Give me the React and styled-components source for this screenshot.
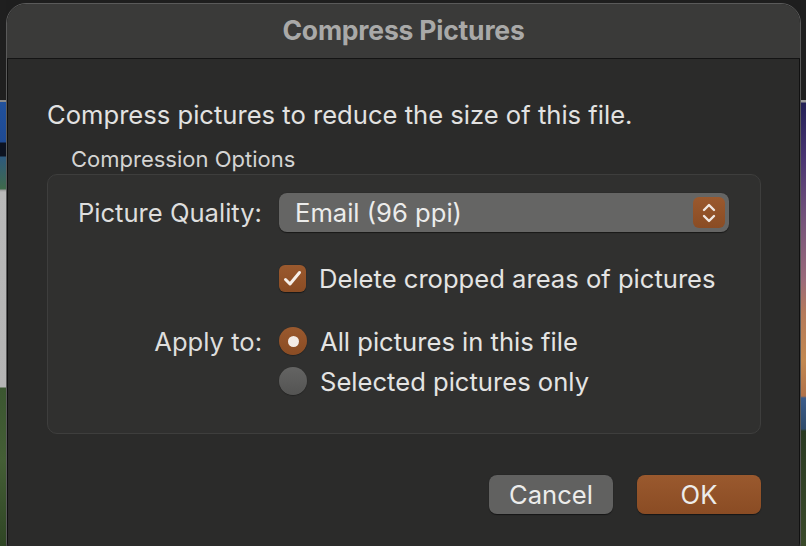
import React, { useState } from "react";
import styled, { createGlobalStyle } from "styled-components";

const GlobalStyle = createGlobalStyle`
  html, body {
    margin: 0;
    padding: 0;
    background: #1e1e1e;
    overflow: hidden;
  }
  * {
    box-sizing: border-box;
  }
`;

const Desktop = styled.div`
  width: 806px;
  height: 546px;
  display: grid;
  grid-template-columns: 6px 1fr 5px;
  background: #1e1e1e;
  font-family: Inter, "Noto Sans", "Liberation Sans", sans-serif;
`;

const Strip = styled.div`
  height: 546px;
  background: ${({ side }) =>
    side === "left"
      ? `linear-gradient(
          to bottom,
          #1f1f1f 0px, #1f1f1f 100px,
          #8a8a8a 100px, #8a8a8a 102px,
          #21519c 102px, #1e4a94 142px,
          #0c1220 143px, #0c1220 156px,
          #2e5a7e 157px, #3f6a4a 189px,
          #9a9a9a 190px, #b9b9b9 192px, #b4b4b4 387px,
          #3b5630 388px, #445e35 460px, #2f4524 546px
        )`
      : `linear-gradient(
          to bottom,
          #1f1f1f 0px, #1f1f1f 100px,
          #9a9a9a 100px, #9a9a9a 102px,
          #222056 103px, #4a3572 160px, #70507a 213px,
          #9a6a7a 280px, #b47a5a 313px, #c28850 360px,
          #b0724a 396px, #3b5c8a 398px, #2e4a6a 429px,
          #2a3a22 431px, #3a4a2a 546px
        )`};
`;

const Dialog = styled.div`
  margin-top: 3px;
  height: 560px;
  background: #2b2b2a;
  border: 1px solid #5a5a5a;
  border-radius: 20px;
  box-shadow: inset 0 0 0 1px #111;
  overflow: hidden;
  display: flex;
  flex-direction: column;
`;

const TitleBar = styled.div`
  height: 55px;
  flex-shrink: 0;
  display: flex;
  align-items: center;
  justify-content: center;
  padding-bottom: 3px;
  background: #3a3a39;
  border-bottom: 1px solid #141414;
`;

const Title = styled.h1`
  margin: 0;
  font-size: 26.5px;
  font-weight: 700;
  color: #a9a9a8;
  letter-spacing: -0.2px;
`;

const Body = styled.div`
  padding: 41px 39px 0 40px;
  display: flex;
  flex-direction: column;
`;

const Description = styled.p`
  margin: 0;
  font-size: 25.6px;
  line-height: 30px;
  color: #e2e2e1;
`;

const GroupLabel = styled.div`
  margin: 16px 0 0 24px;
  font-size: 22px;
  line-height: 26px;
  color: #d4d4d3;
`;

const Group = styled.div`
  margin-top: 2px;
  height: 260px;
  background: #30302f;
  border: 1px solid #3e3e3d;
  border-radius: 10px;
  padding: 18px 31px 0 0;
  display: grid;
  grid-template-columns: 214px 1fr;
  column-gap: 17px;
  align-content: start;
`;

const FieldLabel = styled.div`
  font-size: 25.6px;
  color: #dededd;
  text-align: right;
  display: flex;
  align-items: center;
  justify-content: flex-end;
  white-space: nowrap;
  height: ${({ h }) => h}px;
  margin-top: ${({ mt }) => mt || 0}px;
`;

const Options = styled.div`
  display: flex;
  flex-direction: column;
  margin-top: ${({ mt }) => mt || 0}px;
`;

const Popup = styled.div`
  height: 39px;
  border-radius: 8px;
  background: #656564;
  box-shadow: 0 0.5px 1px rgba(0, 0, 0, 0.5);
  display: flex;
  align-items: center;
  justify-content: space-between;
  padding: 0 4px 0 16px;
  font-size: 25.6px;
  color: #ececeb;
`;

const Stepper = styled.div`
  width: 32px;
  height: 31px;
  border-radius: 6px;
  background: linear-gradient(#9a592e, #8a4c24);
  display: flex;
  align-items: center;
  justify-content: center;
`;

const Choice = styled.label`
  display: flex;
  align-items: center;
  gap: 13px;
  height: ${({ h }) => h || 40}px;
  font-size: 25.6px;
  color: #e4e4e3;
  white-space: nowrap;
  cursor: default;
`;

const CheckBox = styled.span`
  width: 27px;
  height: 27px;
  border-radius: 6px;
  background: linear-gradient(#9a592e, #8a4c24);
  box-shadow: 0 0.5px 1px rgba(0, 0, 0, 0.5);
  display: flex;
  align-items: center;
  justify-content: center;
  flex-shrink: 0;
`;

const Radio = styled.span`
  width: 28px;
  height: 28px;
  border-radius: 50%;
  flex-shrink: 0;
  background: ${({ on }) =>
    on ? "linear-gradient(#9a592e, #8a4c24)" : "linear-gradient(#646463, #545453)"};
  box-shadow: 0 0.5px 1px rgba(0, 0, 0, 0.5);
  display: flex;
  align-items: center;
  justify-content: center;

  &::after {
    content: "";
    display: ${({ on }) => (on ? "block" : "none")};
    width: 11px;
    height: 11px;
    border-radius: 50%;
    background: #f3ebe6;
  }
`;

const Footer = styled.div`
  margin-top: 41px;
  display: flex;
  justify-content: flex-end;
  gap: 24px;
`;

const Button = styled.button`
  width: 124px;
  height: 39px;
  border: none;
  border-radius: 8px;
  font-family: inherit;
  font-size: 25.6px;
  color: #ececeb;
  background: ${({ primary }) =>
    primary ? "linear-gradient(#9a592e, #8a4c24)" : "#616160"};
  box-shadow: 0 0.5px 1px rgba(0, 0, 0, 0.5);
`;

const Check = () => (
  <svg width="19" height="17" viewBox="0 0 19 17">
    <path
      d="M2.5 9.5 L7 14 L16.5 2.5"
      fill="none"
      stroke="#f6efe9"
      strokeWidth="3"
      strokeLinecap="round"
      strokeLinejoin="round"
    />
  </svg>
);

const Chevrons = () => (
  <svg width="16" height="24" viewBox="0 0 16 24">
    <path
      d="M3 9 L8 4 L13 9 M3 15 L8 20 L13 15"
      fill="none"
      stroke="#f1e8e2"
      strokeWidth="2.4"
      strokeLinecap="round"
      strokeLinejoin="round"
    />
  </svg>
);

export default function App() {
  const [target, setTarget] = useState("all");

  return (
    <>
      <GlobalStyle />
      <Desktop>
        <Strip side="left" />
        <Dialog>
          <TitleBar>
            <Title>Compress Pictures</Title>
          </TitleBar>
          <Body>
            <Description>Compress pictures to reduce the size of this file.</Description>
            <GroupLabel>Compression Options</GroupLabel>
            <Group>
              <FieldLabel h={39}>Picture Quality:</FieldLabel>
              <Popup>
                Email (96 ppi)
                <Stepper>
                  <Chevrons />
                </Stepper>
              </Popup>

              <div />
              <Options mt={26}>
                <Choice h={40}>
                  <CheckBox>
                    <Check />
                  </CheckBox>
                  Delete cropped areas of pictures
                </Choice>
              </Options>

              <FieldLabel h={40} mt={23}>Apply to:</FieldLabel>
              <Options mt={23}>
                <Choice h={40} onClick={() => setTarget("all")}>
                  <Radio on={target === "all"} />
                  All pictures in this file
                </Choice>
                <Choice h={40} onClick={() => setTarget("selected")}>
                  <Radio on={target === "selected"} />
                  Selected pictures only
                </Choice>
              </Options>
            </Group>
            <Footer>
              <Button>Cancel</Button>
              <Button primary>OK</Button>
            </Footer>
          </Body>
        </Dialog>
        <Strip side="right" />
      </Desktop>
    </>
  );
}
